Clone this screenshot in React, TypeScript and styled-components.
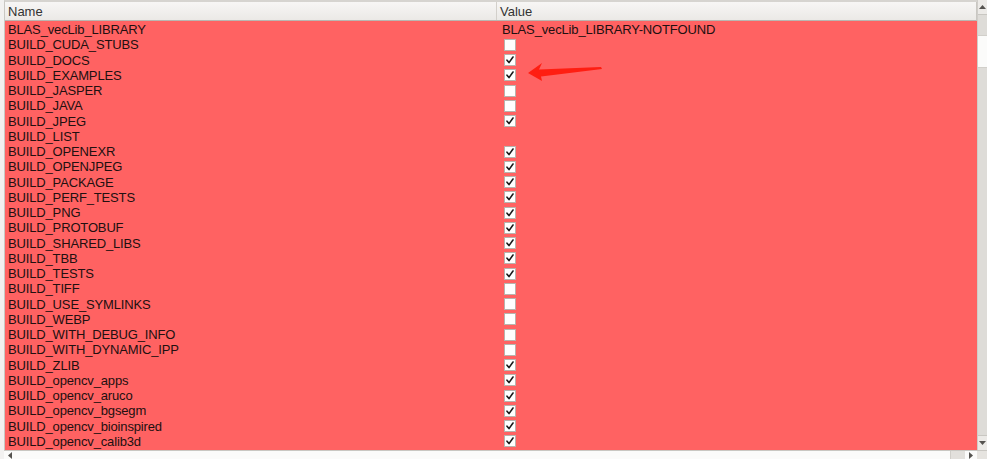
import React from "react";
import styled, { createGlobalStyle } from "styled-components";

const GlobalStyle = createGlobalStyle`
  html, body {
    margin: 0;
    padding: 0;
    background: #f2f1f0;
  }
  body {
    font-family: "Liberation Sans", Arial, sans-serif;
  }
`;

type Entry = {
  name: string;
  value: boolean | string;
};

const entries: Entry[] = [
  { name: "BLAS_vecLib_LIBRARY", value: "BLAS_vecLib_LIBRARY-NOTFOUND" },
  { name: "BUILD_CUDA_STUBS", value: false },
  { name: "BUILD_DOCS", value: true },
  { name: "BUILD_EXAMPLES", value: true },
  { name: "BUILD_JASPER", value: false },
  { name: "BUILD_JAVA", value: false },
  { name: "BUILD_JPEG", value: true },
  { name: "BUILD_LIST", value: "" },
  { name: "BUILD_OPENEXR", value: true },
  { name: "BUILD_OPENJPEG", value: true },
  { name: "BUILD_PACKAGE", value: true },
  { name: "BUILD_PERF_TESTS", value: true },
  { name: "BUILD_PNG", value: true },
  { name: "BUILD_PROTOBUF", value: true },
  { name: "BUILD_SHARED_LIBS", value: true },
  { name: "BUILD_TBB", value: true },
  { name: "BUILD_TESTS", value: true },
  { name: "BUILD_TIFF", value: false },
  { name: "BUILD_USE_SYMLINKS", value: false },
  { name: "BUILD_WEBP", value: false },
  { name: "BUILD_WITH_DEBUG_INFO", value: false },
  { name: "BUILD_WITH_DYNAMIC_IPP", value: false },
  { name: "BUILD_ZLIB", value: true },
  { name: "BUILD_opencv_apps", value: true },
  { name: "BUILD_opencv_aruco", value: true },
  { name: "BUILD_opencv_bgsegm", value: true },
  { name: "BUILD_opencv_bioinspired", value: true },
  { name: "BUILD_opencv_calib3d", value: true },
];

const Window = styled.div`
  width: 987px;
  height: 459px;
  display: flex;
  flex-direction: column;
  overflow: hidden;
  background: #f2f1f0;
`;

const MainArea = styled.div`
  flex: 1;
  display: flex;
  min-height: 0;
`;

const Table = styled.div`
  flex: 1;
  display: flex;
  flex-direction: column;
  min-width: 0;
  margin-left: 4px;
  border-left: 1px solid #c9c7c2;
  border-top: 2px solid #d6d4d0;
  position: relative;
`;

const Header = styled.div`
  display: grid;
  grid-template-columns: 492px 1fr;
  height: 18px;
  background: linear-gradient(#f7f6f5, #ebe9e6);
  border-bottom: 1px solid #b9b6b1;
  border-right: 1px solid #c9c7c2;
`;

const HeaderCell = styled.div<{ $divider?: boolean }>`
  display: flex;
  align-items: center;
  padding-left: 3px;
  font-size: 13px;
  color: #333333;
  border-right: ${(p) => (p.$divider ? "1px solid #d3d0cb" : "none")};
`;

const Body = styled.div`
  flex: 1;
  background: #ff6262;
  overflow: hidden;
  padding-top: 1px;
`;

const Row = styled.div`
  display: grid;
  grid-template-columns: 493px 1fr;
  height: 15.25px;
  align-items: center;
`;

const NameCell = styled.div`
  padding-left: 3px;
  font-size: 13px;
  letter-spacing: -0.15px;
  color: #221010;
  white-space: nowrap;
  line-height: 15px;
`;

const ValueCell = styled.div`
  padding-left: 4px;
  font-size: 13px;
  letter-spacing: -0.15px;
  color: #221010;
  white-space: nowrap;
  line-height: 15px;
  display: flex;
  align-items: center;
`;

const Checkbox = styled.span`
  width: 10px;
  height: 10px;
  margin-left: 2px;
  background: #ffffff;
  border: 1px solid #b8b4ae;
  display: flex;
  align-items: center;
  justify-content: center;
`;

const VScroll = styled.div`
  width: 9px;
  display: flex;
  flex-direction: column;
  background: #dedcd8;
  border-left: 1px solid #cfcdc9;
`;

const ArrowButton = styled.div`
  height: 14px;
  display: flex;
  align-items: center;
  justify-content: center;
  background: #eceae7;
`;

const Track = styled.div`
  flex: 1;
  display: flex;
  flex-direction: column;
  padding-top: 20px;
  border-top: 1px solid #c9c7c2;
  border-bottom: 1px solid #c9c7c2;
`;

const Thumb = styled.div`
  height: 31px;
  background: #fbfbfa;
  border-top: 1px solid #d1cfca;
  border-bottom: 1px solid #d1cfca;
`;

const HScroll = styled.div`
  height: 8px;
  display: flex;
  border-top: 1px solid #c9c7c2;
  margin-left: 4px;
  background: #fbfbfa;
`;

const HArrow = styled.div`
  width: 12px;
  display: flex;
  align-items: center;
  justify-content: center;
`;

const HTrack = styled.div`
  flex: 1;
`;

const HThumb = styled.div`
  width: 14px;
  background: #e2e0dc;
  border-left: 1px solid #d0cec9;
`;

const Corner = styled.div`
  width: 10px;
  background: #e6e4e0;
`;

const Annotation = styled.svg`
  position: absolute;
  left: 517px;
  top: 56px;
  pointer-events: none;
`;

function Check() {
  return (
    <svg width="8" height="8" viewBox="0 0 8 8">
      <path
        d="M1 4.2 L3 6.6 L7 1"
        fill="none"
        stroke="#1a1a1a"
        strokeWidth="1.6"
        strokeLinecap="round"
        strokeLinejoin="round"
      />
    </svg>
  );
}

function Triangle({ dir }: { dir: "up" | "down" | "left" | "right" }) {
  const paths = {
    up: "M0 5 L3.5 1 L7 5 Z",
    down: "M0 1 L3.5 5 L7 1 Z",
    left: "M5 0 L1 3.5 L5 7 Z",
    right: "M1 0 L5 3.5 L1 7 Z",
  };
  return (
    <svg width="7" height="7" viewBox="0 0 7 7">
      <path d={paths[dir]} fill="#555350" />
    </svg>
  );
}

function App() {
  return (
    <>
      <GlobalStyle />
      <Window>
        <MainArea>
          <Table>
            <Header>
              <HeaderCell $divider>Name</HeaderCell>
              <HeaderCell>Value</HeaderCell>
            </Header>
            <Body>
              {entries.map((e) => (
                <Row key={e.name}>
                  <NameCell>{e.name}</NameCell>
                  <ValueCell>
                    {typeof e.value === "boolean" ? (
                      <Checkbox>{e.value && <Check />}</Checkbox>
                    ) : (
                      e.value
                    )}
                  </ValueCell>
                </Row>
              ))}
            </Body>
            <Annotation width="84" height="26" viewBox="0 0 84 26">
              <path
                d="M6 15 L20 5 L17 11.5 L79 9 L80 11 L19 18.5 L20 23 Z"
                fill="#ff1e12"
              />
            </Annotation>
          </Table>
          <VScroll>
            <ArrowButton>
              <Triangle dir="up" />
            </ArrowButton>
            <Track>
              <Thumb />
            </Track>
            <ArrowButton>
              <Triangle dir="down" />
            </ArrowButton>
          </VScroll>
        </MainArea>
        <HScroll>
          <HArrow>
            <Triangle dir="left" />
          </HArrow>
          <HTrack />
          <HThumb />
          <HArrow>
            <Triangle dir="right" />
          </HArrow>
          <Corner />
        </HScroll>
      </Window>
    </>
  );
}

export default App;
